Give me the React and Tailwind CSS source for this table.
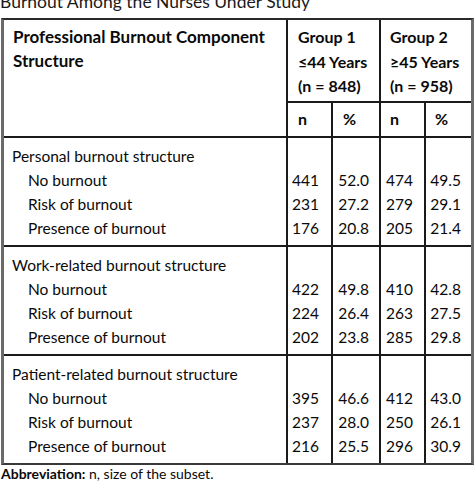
import React from 'react';

const SECTIONS = [
  {
    title: 'Personal burnout structure',
    rows: [
      ['No burnout', '441', '52.0', '474', '49.5'],
      ['Risk of burnout', '231', '27.2', '279', '29.1'],
      ['Presence of burnout', '176', '20.8', '205', '21.4'],
    ],
  },
  {
    title: 'Work-related burnout structure',
    rows: [
      ['No burnout', '422', '49.8', '410', '42.8'],
      ['Risk of burnout', '224', '26.4', '263', '27.5'],
      ['Presence of burnout', '202', '23.8', '285', '29.8'],
    ],
  },
  {
    title: 'Patient-related burnout structure',
    rows: [
      ['No burnout', '395', '46.6', '412', '43.0'],
      ['Risk of burnout', '237', '28.0', '250', '26.1'],
      ['Presence of burnout', '216', '25.5', '296', '30.9'],
    ],
  },
];

const COLS = 'grid grid-cols-[282px_45px_48px_45px_47px]';
const PAD = ['pr-[12px]', 'pr-[10px]', 'pr-[11px]', 'pr-[10px]'];

function Row({ cells, height, top }) {
  const [label, ...nums] = cells;
  return (
    <div className={`${COLS} ${height}`}>
      <div className={top ? 'pl-[8px] pt-[6px] leading-[24px]' : 'pl-[24px] leading-[24px]'}>{label}</div>
      {[0, 1, 2, 3].map((i) => (
        <div key={i} className={`border-l-2 border-[#1a1a1a] text-right leading-[24px] ${PAD[i]}`}>
          {nums[i] || ''}
        </div>
      ))}
    </div>
  );
}

export default function App() {
  return (
    <div className="w-[474px] h-[482px] overflow-hidden bg-white font-['Lato',sans-serif] text-[15.5px] text-[#0a0a0a]">
      <p className="-mt-[9px] mb-[5px] text-[17.5px] leading-[22px] text-[#1a1a1a]">
        Burnout Among the Nurses Under Study
      </p>

      <div className="ml-[1px] w-[473px] border-l-[3px] border-r-[3px] border-[#6a6a6a] border-t-2 border-t-[#2a2a2a] border-b-2 border-b-[#3a3a3a]">
        {/* header */}
        <div className={`${COLS} grid-rows-[83px_33px] border-b-2 border-[#1a1a1a] text-[16px] font-bold`}>
          <div className="row-span-2 pl-[9px] pt-[5px] text-[17px] leading-[24px]">
            Professional Burnout Component
            <br />
            Structure
          </div>
          <div className="col-span-2 border-l-2 border-b-2 border-[#1a1a1a] pl-[10px] pt-[5px] leading-[24.5px]">
            Group 1<br />≤44 Years<br />(n = 848)
          </div>
          <div className="col-span-2 border-l-2 border-b-2 border-[#1a1a1a] pl-[9px] pt-[5px] leading-[24.5px]">
            Group 2<br />≥45 Years<br />(n = 958)
          </div>
          <div className="border-l-2 border-[#1a1a1a] pl-[10px] leading-[32px]">n</div>
          <div className="border-l-2 border-[#1a1a1a] pl-[10px] leading-[32px]">%</div>
          <div className="border-l-2 border-[#1a1a1a] pl-[9px] leading-[32px]">n</div>
          <div className="border-l-2 border-[#1a1a1a] pl-[9px] leading-[32px]">%</div>
        </div>

        {SECTIONS.map((s, si) => (
          <div key={s.title} className={si < SECTIONS.length - 1 ? 'border-b-2 border-[#1a1a1a]' : ''}>
            <Row cells={[s.title]} height="h-[30px]" top />
            {s.rows.map((r, ri) => (
              <Row key={r[0]} cells={r} height={ri === s.rows.length - 1 ? 'h-[29px]' : 'h-[24px]'} />
            ))}
          </div>
        ))}
      </div>

      <p className="pl-[1px] text-[14px] leading-[18px]">
        <span className="font-bold">Abbreviation:</span> n, size of the subset.
      </p>
    </div>
  );
}
